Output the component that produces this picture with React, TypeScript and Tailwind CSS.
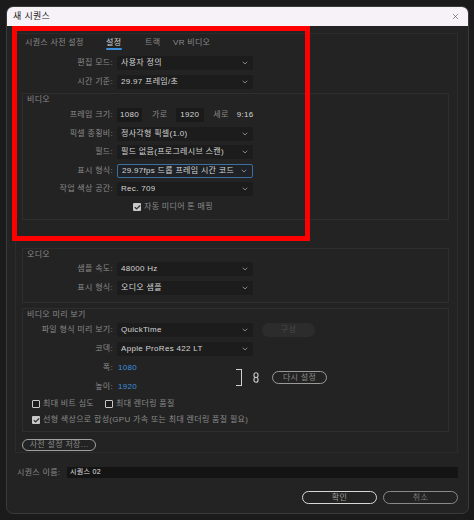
import { ChevronDown, X, Check } from "lucide-react";
import type { ReactNode } from "react";

const font = { fontFamily: '"Liberation Sans", "Noto Sans CJK KR", sans-serif' };

function Select({ value, focused = false }: { value: string; focused?: boolean }) {
  return (
    <div
      className={`flex h-[14px] w-[136px] items-center justify-between rounded-[2px] px-[4px] text-[#d4d4d4] ${
        focused ? "border border-[#3c6e9e] bg-[#1e2226]" : "bg-[#1c1c1c]"
      }`}
    >
      <span className="truncate">{value}</span>
      <ChevronDown size={8} strokeWidth={2.5} className="shrink-0 text-[#9a9a9a]" />
    </div>
  );
}

function Row({ label, children }: { label: string; children: ReactNode }) {
  return (
    <div className="flex h-[14px] items-center">
      <span className="w-[90px] shrink-0 text-right text-[#8a8a8a]">{label}</span>
      <div className="ml-[4px] flex items-center">{children}</div>
    </div>
  );
}

function Box({ checked = false }: { checked?: boolean }) {
  return (
    <span
      className={`flex h-[8px] w-[8px] shrink-0 items-center justify-center rounded-[1px] ${
        checked ? "bg-[#c8c8c8]" : "border border-[#c8c8c8] bg-[#1c1c1c]"
      }`}
    >
      {checked && <Check size={7} strokeWidth={4} className="text-[#2a2a2a]" />}
    </span>
  );
}

function Section({ title, className, children }: { title: string; className: string; children: ReactNode }) {
  return (
    <div className={`border border-[#2e2e2e] ${className}`}>
      <div className="flex h-[12px] items-center pl-[4px] text-[#8a8a8a]">{title}</div>
      {children}
    </div>
  );
}

export default function App() {
  return (
    <div className="relative h-[520px] w-[474px] bg-[#1b1b1b] pl-[6px] pt-[6px] text-[8px] tracking-[0.3px]" style={font}>
      <div className="h-[508px] w-[463px] overflow-hidden rounded-[7px] border border-[#3a3a3a] bg-[#232323]">
        {/* title bar */}
        <div className="flex h-[19px] items-center justify-between bg-[#f6f2f7] pl-[6px] pr-[8px] text-[9px] text-[#1a1a1a]">
          <span>새 시퀀스</span>
          <X size={9} strokeWidth={1.5} className="text-[#444]" />
        </div>

        <div className="pl-[8px] pr-[10px] pt-[7px]">
          {/* settings panel */}
          <div className="h-[420px] border border-[#2c2c2c]">
            <div className="flex h-[18px] items-center pl-[9px] text-[#8a8a8a]">
              <span className="w-[81px]">시퀀스 사전 설정</span>
              <span className="relative w-[39px] text-[#d4d4d4]">
                설정
                <span className="absolute left-0 top-[11px] h-[2px] w-[16px] rounded-full bg-[#3d8fdc]" />
              </span>
              <span className="w-[28px]">트랙</span>
              <span>VR 비디오</span>
            </div>

            <div className="pl-[6px] pr-[8px]">
              <div className="mt-[4px] flex flex-col gap-[5px] pl-[1px]">
                <Row label="편집 모드:">
                  <Select value="사용자 정의" />
                </Row>
                <Row label="시간 기준:">
                  <Select value="29.97 프레임/초" />
                </Row>
              </div>

              <Section title="비디오" className="mt-[4px] pb-[6px]">
                <div className="mt-[2px] flex flex-col gap-[4.5px]">
                  <Row label="프레임 크기:">
                    <span className="flex h-[14px] w-[25px] items-center bg-[#1a1a1a] pl-[3px] text-[#d4d4d4]">1080</span>
                    <span className="ml-[10px] text-[#8a8a8a]">가로</span>
                    <span className="ml-[9px] flex h-[14px] w-[28px] items-center bg-[#1a1a1a] pl-[4px] text-[#d4d4d4]">1920</span>
                    <span className="ml-[9px] text-[#8a8a8a]">세로</span>
                    <span className="ml-[8px] text-[#d4d4d4]">9:16</span>
                  </Row>
                  <Row label="픽셀 종횡비:">
                    <Select value="정사각형 픽셀(1.0)" />
                  </Row>
                  <Row label="필드:">
                    <Select value="필드 없음(프로그레시브 스캔)" />
                  </Row>
                  <Row label="표시 형식:">
                    <Select value="29.97fps 드롭 프레임 시간 코드" focused />
                  </Row>
                  <Row label="작업 색상 공간:">
                    <Select value="Rec. 709" />
                  </Row>
                </div>
                <div className="mt-[5px] flex h-[12px] items-center gap-[3px] pl-[110px] text-[#8a8a8a]">
                  <Box checked />
                  <span>자동 미디어 톤 매핑</span>
                </div>
              </Section>

              <Section title="오디오" className="mt-[28px] pb-[7px]">
                <div className="mt-[1px] flex flex-col gap-[5px]">
                  <Row label="샘플 속도:">
                    <Select value="48000 Hz" />
                  </Row>
                  <Row label="표시 형식:">
                    <Select value="오디오 샘플" />
                  </Row>
                </div>
              </Section>

              <Section title="비디오 미리 보기" className="mt-[5px] pb-[5px]">
                <div className="mt-[2px] flex flex-col gap-[5px]">
                  <Row label="파일 형식 미리 보기:">
                    <Select value="QuickTime" />
                    <span className="ml-[9px] flex h-[14px] w-[53px] items-center justify-center rounded-full bg-[#2c2c2c] text-[#4a4a4a]">
                      구성
                    </span>
                  </Row>
                  <Row label="코덱:">
                    <Select value="Apple ProRes 422 LT" />
                  </Row>
                  <div className="flex items-center">
                    <div className="flex w-[213px] flex-col gap-[5px]">
                      <Row label="폭:">
                        <span className="pl-[1px] text-[#3d8fdc]">1080</span>
                      </Row>
                      <Row label="높이:">
                        <span className="pl-[1px] text-[#3d8fdc]">1920</span>
                      </Row>
                    </div>
                    <span className="h-[17px] w-[6px] border-y-[1.5px] border-r-[1.5px] border-[#d0d0d0]" />
                    <svg width="6" height="11" viewBox="0 0 6 11" className="ml-[11px]">
                      <rect x="1" y="0.75" width="4" height="5" rx="2" fill="none" stroke="#c8c8c8" strokeWidth="1.2" />
                      <rect x="1" y="5.25" width="4" height="5" rx="2" fill="none" stroke="#c8c8c8" strokeWidth="1.2" />
                    </svg>
                    <span className="ml-[13px] flex h-[13px] w-[55px] items-center justify-center rounded-full border border-[#9a9a9a] text-[#8a8a8a]">
                      다시 설정
                    </span>
                  </div>
                </div>
                <div className="mt-[4px] flex h-[12px] items-center pl-[9px] text-[#8a8a8a]">
                  <Box />
                  <span className="ml-[3px] w-[62px]">최대 비트 심도</span>
                  <Box />
                  <span className="ml-[3px]">최대 렌더링 품질</span>
                </div>
                <div className="mt-[4px] flex h-[12px] items-center gap-[3px] pl-[9px] text-[#8a8a8a]">
                  <Box checked />
                  <span>선형 색상으로 합성(GPU 가속 또는 최대 렌더링 품질 필요)</span>
                </div>
              </Section>

              <div className="mt-[7px] flex h-[12px] w-[74px] items-center justify-center rounded-full border border-[#a0a0a0] text-[#8a8a8a]">
                사전 설정 저장...
              </div>
            </div>
          </div>

          {/* sequence name */}
          <div className="mt-[14px] flex h-[11px] items-center pl-[2px]">
            <span className="w-[50px] text-[#8a8a8a]">시퀀스 이름:</span>
            <div className="flex h-[11px] flex-1 items-center bg-[#141414] pl-[3px] text-[7px] text-[#e0e0e0]">
              시퀀스 02
            </div>
          </div>

          <div className="mt-[13px] flex justify-end gap-[6px]">
            <span className="flex h-[13px] w-[75px] items-center justify-center rounded-full border-[1.5px] border-[#d8d8d8] text-[#9a9a9a]">
              확인
            </span>
            <span className="flex h-[13px] w-[75px] items-center justify-center rounded-full border border-[#8a8a8a] text-[#7a7a7a]">
              취소
            </span>
          </div>
        </div>
      </div>

      {/* red highlight frame */}
      <div className="pointer-events-none absolute left-[12px] top-[26px] h-[215px] w-[298px] border-[5px] border-[#ff0000]" />
    </div>
  );
}
